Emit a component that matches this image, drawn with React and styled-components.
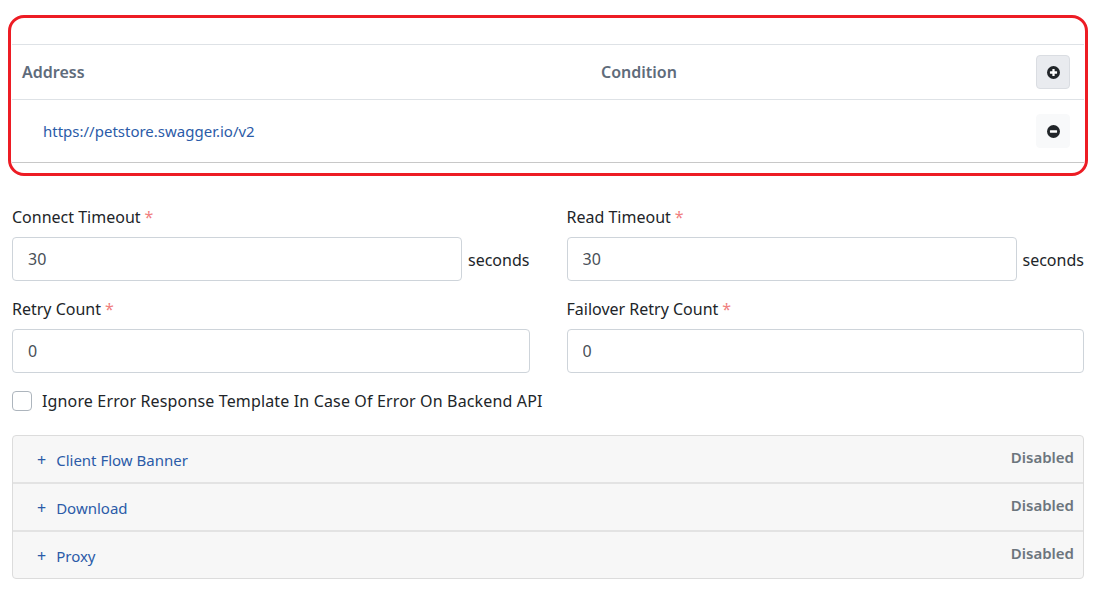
import React from "react";
import styled, { createGlobalStyle } from "styled-components";

const GlobalStyle = createGlobalStyle`
  body {
    margin: 0;
    background: #fff;
    font-family: "Noto Sans", "Open Sans", sans-serif;
    font-size: 16px;
    color: #212529;
  }
`;

const Page = styled.div`
  padding: 15px 12px 0;
`;

const Highlight = styled.div`
  margin: 0 -4px;
  padding: 26px 1px 10px;
  border: 3px solid #ed1c24;
  border-radius: 16px;
`;

const Table = styled.div`
  border-top: 1px solid #dee2e6;
  border-bottom: 1px solid #c8c8c8;
`;

const Row = styled.div`
  display: grid;
  grid-template-columns: 579px 1fr auto;
  align-items: center;
  height: ${(p) => (p.$head ? "54px" : "62px")};
  padding-right: 14px;
  border-top: ${(p) => (p.$head ? "none" : "1px solid #dee2e6")};
`;

const HeadCell = styled.div`
  padding-left: 10px;
  font-weight: 600;
  color: #5f6c7b;
`;

const LinkCell = styled.div`
  padding-left: 31px;
  font-size: 15px;
  color: #2b5ba8;
`;

const IconButton = styled.button`
  width: 34px;
  height: 34px;
  display: flex;
  align-items: center;
  justify-content: center;
  padding: 0;
  border-radius: 4px;
  border: 1px solid ${(p) => (p.$muted ? "#f8f9fa" : "#dadde2")};
  background: ${(p) => (p.$muted ? "#f8f9fa" : "#e9ebef")};
  cursor: pointer;
`;

const Form = styled.div`
  display: grid;
  grid-template-columns: 1fr 1fr;
  column-gap: 37px;
  row-gap: 16px;
  margin-top: 29px;
`;

const Field = styled.div`
  display: flex;
  flex-direction: column;
`;

const Label = styled.label`
  line-height: 24px;
  margin-bottom: 8px;
  color: #212529;
`;

const Required = styled.span`
  color: #f08080;
  margin-left: 4px;
`;

const InputLine = styled.div`
  display: flex;
  align-items: center;
  gap: 6px;
`;

const Input = styled.input`
  box-sizing: border-box;
  width: ${(p) => (p.$short ? "450px" : "100%")};
  height: 44px;
  padding: 0 15px;
  border: 1px solid #ced4da;
  border-radius: 4px;
  font: inherit;
  color: #495057;
`;

const Unit = styled.span`
  margin-top: 2px;
  color: #212529;
`;

const CheckRow = styled.label`
  display: flex;
  align-items: center;
  gap: 10px;
  margin-top: 18px;
  height: 20px;
  letter-spacing: 0.15px;
`;

const Box = styled.span`
  box-sizing: border-box;
  width: 20px;
  height: 20px;
  border: 1px solid #adb5bd;
  border-radius: 4px;
  background: #fff;
`;

const Accordion = styled.div`
  margin-top: 24px;
  border: 1px solid #dcdcdc;
  border-radius: 4px;
  background: #f7f7f7;
  overflow: hidden;
  font-size: 15px;
`;

const Panel = styled.div`
  display: flex;
  justify-content: space-between;
  height: 46px;
  padding: 0 9px 0 24px;
  border-top: ${(p) => (p.$first ? "none" : "2px solid #e3e3e3")};
`;

const PanelTitle = styled.div`
  display: flex;
  align-items: center;
  gap: 10px;
  padding-top: 2px;
  color: #2b5ba8;
`;

const Plus = styled.span`
  font-size: 16px;
`;

const Status = styled.div`
  display: flex;
  align-items: center;
  padding-bottom: 5px;
  font-weight: 600;
  color: #6c757d;
`;

const CircleIcon = ({ plus }) => (
  <svg width="13" height="13" viewBox="0 0 16 16">
    <circle cx="8" cy="8" r="8" fill="#212529" />
    <rect x="3.6" y="6.6" width="8.8" height="2.8" rx="0.4" fill="#fff" />
    {plus && <rect x="6.6" y="3.6" width="2.8" height="8.8" rx="0.4" fill="#fff" />}
  </svg>
);

const panels = ["Client Flow Banner", "Download", "Proxy"];

export default function App() {
  return (
    <Page>
      <GlobalStyle />
      <Highlight>
        <Table>
          <Row $head>
            <HeadCell>Address</HeadCell>
            <HeadCell>Condition</HeadCell>
            <IconButton>
              <CircleIcon plus />
            </IconButton>
          </Row>
          <Row>
            <LinkCell>https://petstore.swagger.io/v2</LinkCell>
            <div />
            <IconButton $muted>
              <CircleIcon />
            </IconButton>
          </Row>
        </Table>
      </Highlight>

      <Form>
        <Field>
          <Label>
            Connect Timeout<Required>*</Required>
          </Label>
          <InputLine>
            <Input $short defaultValue="30" />
            <Unit>seconds</Unit>
          </InputLine>
        </Field>
        <Field>
          <Label>
            Read Timeout<Required>*</Required>
          </Label>
          <InputLine>
            <Input $short defaultValue="30" />
            <Unit>seconds</Unit>
          </InputLine>
        </Field>
        <Field>
          <Label>
            Retry Count<Required>*</Required>
          </Label>
          <Input defaultValue="0" />
        </Field>
        <Field>
          <Label>
            Failover Retry Count<Required>*</Required>
          </Label>
          <Input defaultValue="0" />
        </Field>
      </Form>

      <CheckRow>
        <Box />
        Ignore Error Response Template In Case Of Error On Backend API
      </CheckRow>

      <Accordion>
        {panels.map((name, i) => (
          <Panel key={name} $first={i === 0}>
            <PanelTitle>
              <Plus>+</Plus>
              {name}
            </PanelTitle>
            <Status>Disabled</Status>
          </Panel>
        ))}
      </Accordion>
    </Page>
  );
}
